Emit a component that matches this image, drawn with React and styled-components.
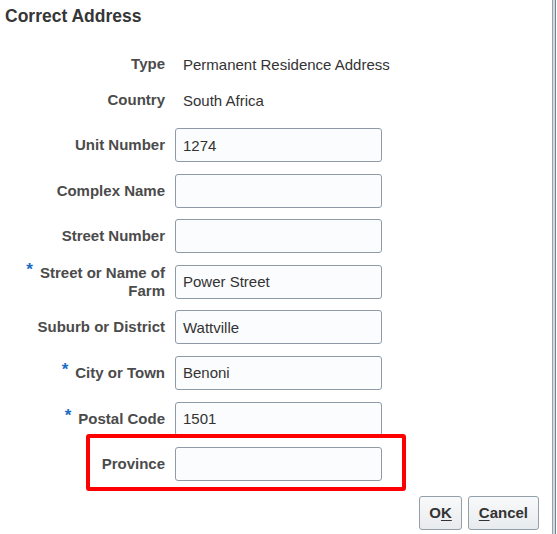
import React from "react";
import styled, { createGlobalStyle } from "styled-components";

const GlobalStyle = createGlobalStyle`
  html, body {
    margin: 0;
    padding: 0;
    background: #ffffff;
  }
  body {
    font-family: "Liberation Sans", Arial, sans-serif;
    color: #333333;
  }
`;

const info = [
  { label: "Type", value: "Permanent Residence Address" },
  { label: "Country", value: "South Africa" },
];

const fields = [
  { label: "Unit Number", value: "1274" },
  { label: "Complex Name", value: "" },
  { label: "Street Number", value: "" },
  { label: "Street or Name of Farm", value: "Power Street", required: true },
  { label: "Suburb or District", value: "Wattville" },
  { label: "City or Town", value: "Benoni", required: true },
  { label: "Postal Code", value: "1501", required: true },
];

const App = () => {
  return (
    <>
      <GlobalStyle />
      <Page>
        <Dialog>
          <Title>Correct Address</Title>
          <Form>
            <InfoList>
              {info.map((item) => (
                <Row key={item.label} $height={36}>
                  <Label $width={165}>{item.label}</Label>
                  <Value>{item.value}</Value>
                </Row>
              ))}
            </InfoList>
            <FieldList>
              {fields.map((field) => (
                <Row key={field.label} $height={34}>
                  <Label $width={165}>
                    {field.required && <Required>*</Required>}
                    {field.label}
                  </Label>
                  <Input type="text" defaultValue={field.value} />
                </Row>
              ))}
            </FieldList>
            <Highlight>
              <Row $height={34}>
                <Label $width={75} $pad={0}>
                  Province
                </Label>
                <Input type="text" defaultValue="" />
              </Row>
            </Highlight>
          </Form>
          <ButtonBar>
            <Button $pad={9}>
              O<u>K</u>
            </Button>
            <Button $pad={10}>
              <u>C</u>ancel
            </Button>
          </ButtonBar>
        </Dialog>
        <Edge />
      </Page>
    </>
  );
};

const Page = styled.div`
  display: flex;
  width: 557px;
  height: 534px;
  overflow: hidden;
`;

const Dialog = styled.div`
  width: 552px;
  display: flex;
  flex-direction: column;
`;

const Edge = styled.div`
  width: 2px;
  margin-right: 1px;
  background: #d3d8dd;
  border-left: 1px solid #9aa4ae;
  border-right: 1px solid #74838f;
`;

const Title = styled.h1`
  margin: 0;
  padding: 5px 5px 19px;
  font-size: 17.5px;
  line-height: 22px;
  font-weight: bold;
  color: #363636;
`;

const Form = styled.div`
  display: flex;
  flex-direction: column;
`;

const InfoList = styled.div`
  display: flex;
  flex-direction: column;
`;

const FieldList = styled.div`
  display: flex;
  flex-direction: column;
  gap: 11.6px;
  margin-top: 10px;
`;

const Row = styled.div`
  display: flex;
  align-items: center;
  height: ${(p) => p.$height}px;
`;

const Label = styled.label`
  box-sizing: border-box;
  width: ${(p) => p.$width}px;
  flex-shrink: 0;
  padding-left: ${(p) => (p.$pad === undefined ? 20 : p.$pad)}px;
  margin-right: 10px;
  text-align: right;
  white-space: ${(p) => (p.$pad === 0 ? "nowrap" : "normal")};
  font-size: 15px;
  line-height: 18px;
  font-weight: bold;
  color: #4b4b4b;
`;

const Required = styled.span`
  display: inline-block;
  margin-right: 7px;
  color: #1c6bc5;
  font-size: 17px;
  vertical-align: 3px;
  line-height: 10px;
`;

const Value = styled.span`
  padding-left: 8px;
  font-size: 15px;
  color: #333333;
`;

const Input = styled.input`
  box-sizing: border-box;
  width: 207px;
  height: 34px;
  margin: 0;
  padding: 0 7px;
  border: 1px solid #8e9ba7;
  border-radius: 3px;
  background: #fbfcfd;
  font-family: "Liberation Sans", Arial, sans-serif;
  font-size: 15px;
  color: #333333;
  outline: none;
`;

const Highlight = styled.div`
  box-sizing: border-box;
  width: 320px;
  margin: -1.6px 0 0 86px;
  padding: 9px 0 6px;
  border: 4px solid #ff0000;
  border-radius: 3px;
`;

const ButtonBar = styled.div`
  display: flex;
  justify-content: flex-end;
  gap: 6px;
  margin-top: 5px;
  padding-right: 13px;
`;

const Button = styled.button`
  height: 34px;
  padding: 0 ${(p) => p.$pad}px;
  border: 1px solid #939fa9;
  border-radius: 3px;
  background: linear-gradient(#f8f9fa, #e8ebee);
  font-family: "Liberation Sans", Arial, sans-serif;
  font-size: 15px;
  font-weight: bold;
  color: #333333;
  u {
    text-decoration-thickness: 1px;
    text-underline-offset: 2px;
  }
`;

export default App;
